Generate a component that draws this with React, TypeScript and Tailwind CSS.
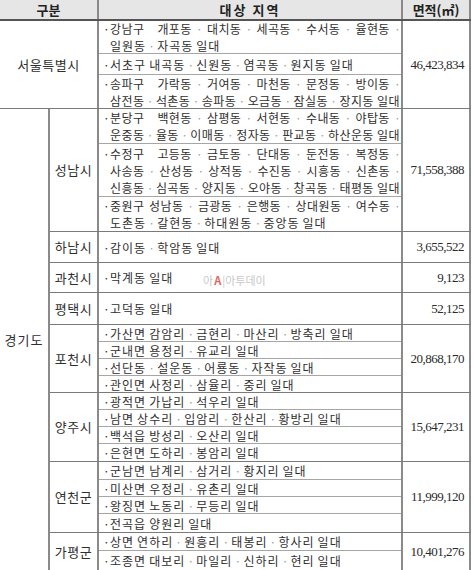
import React from 'react';
import clsx from 'clsx';

type Line = { t: string; full?: boolean; gu?: boolean };
type Sub = { h: string; lines: Line[] };
type City = { name: string; h: string; area: string; subs: Sub[] };

const seoul: Sub[] = [
  {
    h: 'h-[33px]',
    lines: [
      { t: '·강남구 개포동 · 대치동 · 세곡동 · 수서동 · 율현동 ·', full: true, gu: true },
      { t: '일원동 · 자곡동 일대' },
    ],
  },
  { h: 'h-[21px]', lines: [{ t: '·서초구 내곡동 · 신원동 · 염곡동 · 원지동 일대' }] },
  {
    h: 'h-[33px]',
    lines: [
      { t: '·송파구 가락동 · 거여동 · 마천동 · 문정동 · 방이동 ·', full: true, gu: true },
      { t: '삼전동 · 석촌동 · 송파동 · 오금동 · 잠실동 · 장지동 일대', full: true },
    ],
  },
];

const cities: City[] = [
  {
    name: '성남시',
    h: 'h-[123px]',
    area: '71,558,388',
    subs: [
      {
        h: 'h-[35px]',
        lines: [
          { t: '·분당구 백현동 · 삼평동 · 서현동 · 수내동 · 야탑동 ·', full: true, gu: true },
          { t: '운중동 · 율동 · 이매동 · 정자동 · 판교동 · 하산운동 일대', full: true },
        ],
      },
      {
        h: 'h-[53px]',
        lines: [
          { t: '·수정구 고등동 · 금토동 · 단대동 · 둔전동 · 복정동 ·', full: true, gu: true },
          { t: '사송동 · 산성동 · 상적동 · 수진동 · 시흥동 · 신촌동 ·', full: true },
          { t: '신흥동 · 심곡동 · 양지동 · 오야동 · 창곡동 · 태평동 일대', full: true },
        ],
      },
      {
        h: 'h-[34px]',
        lines: [
          { t: '·중원구 성남동 · 금광동 · 은행동 · 상대원동 · 여수동 ·', full: true },
          { t: '도촌동 · 갈현동 · 하대원동 · 중앙동 일대' },
        ],
      },
    ],
  },
  { name: '하남시', h: 'h-[31px]', area: '3,655,522', subs: [{ h: 'h-[30px]', lines: [{ t: '·감이동 · 학암동 일대' }] }] },
  { name: '과천시', h: 'h-[30px]', area: '9,123', subs: [{ h: 'h-[29px]', lines: [{ t: '·막계동 일대' }] }] },
  { name: '평택시', h: 'h-[32px]', area: '52,125', subs: [{ h: 'h-[31px]', lines: [{ t: '·고덕동 일대' }] }] },
  {
    name: '포천시',
    h: 'h-[68px]',
    area: '20,868,170',
    subs: [
      { h: 'h-[17px]', lines: [{ t: '·가산면 감암리 · 금현리 · 마산리 · 방축리 일대' }] },
      { h: 'h-[17px]', lines: [{ t: '·군내면 용정리 · 유교리 일대' }] },
      { h: 'h-[17px]', lines: [{ t: '·선단동 · 설운동 · 어룡동 · 자작동 일대' }] },
      { h: 'h-[16px]', lines: [{ t: '·관인면 사정리 · 삼율리 · 중리 일대' }] },
    ],
  },
  {
    name: '양주시',
    h: 'h-[69px]',
    area: '15,647,231',
    subs: [
      { h: 'h-[17px]', lines: [{ t: '·광적면 가납리 · 석우리 일대' }] },
      { h: 'h-[17px]', lines: [{ t: '·남면 상수리 · 입암리 · 한산리 · 황방리 일대' }] },
      { h: 'h-[17px]', lines: [{ t: '·백석읍 방성리 · 오산리 일대' }] },
      { h: 'h-[17px]', lines: [{ t: '·은현면 도하리 · 봉암리 일대' }] },
    ],
  },
  {
    name: '연천군',
    h: 'h-[71px]',
    area: '11,999,120',
    subs: [
      { h: 'h-[18px]', lines: [{ t: '·군남면 남계리 · 삼거리 · 황지리 일대' }] },
      { h: 'h-[17px]', lines: [{ t: '·미산면 우정리 · 유촌리 일대' }] },
      { h: 'h-[17px]', lines: [{ t: '·왕징면 노동리 · 무등리 일대' }] },
      { h: 'h-[18px]', lines: [{ t: '·전곡읍 양원리 일대' }] },
    ],
  },
  {
    name: '가평군',
    h: 'h-[38px]',
    area: '10,401,276',
    subs: [
      { h: 'h-[18px]', lines: [{ t: '·상면 연하리 · 원흥리 · 태봉리 · 항사리 일대' }] },
      { h: 'h-[19px]', lines: [{ t: '·조종면 대보리 · 마일리 · 신하리 · 현리 일대' }] },
    ],
  },
];

const TextLine = ({ line, cont }: { line: Line; cont: boolean }) => {
  const tokens = line.t.split(' ');
  return (
    <div
      className={clsx(
        'flex h-[17px] shrink-0 items-center whitespace-nowrap leading-[17px]',
        line.full ? 'justify-between pr-[1px] tracking-[0.4px]' : 'gap-[3px] tracking-[1px]',
        cont ? 'pl-[11px]' : 'pl-[4px]'
      )}
    >
      {tokens.map((tok, i) =>
        tok === '·' ? (
          <span key={i} className="flex w-[5px] justify-center tracking-normal text-[#a0a0a0]">·</span>
        ) : tok.startsWith('·') ? (
          <span key={i} className={clsx('flex', line.gu && 'mr-[8px]')}>
            <span className="inline-block w-[7px] tracking-normal">·</span>
            {tok.slice(1)}
          </span>
        ) : (
          <span key={i}>{tok}</span>
        )
      )}
    </div>
  );
};

const Areas = ({ subs }: { subs: Sub[] }) => (
  <div className="flex w-[304px] shrink-0 flex-col border-r-2 border-[#8a8a8a]">
    {subs.map((s, i) => (
      <div
        key={i}
        className={clsx(
          'flex flex-col justify-center overflow-hidden',
          s.h,
          i < subs.length - 1 && 'border-b border-[#a6a6a6]'
        )}
      >
        {s.lines.map((l, j) => (
          <TextLine key={j} line={l} cont={j > 0} />
        ))}
      </div>
    ))}
  </div>
);

const Num = ({ v }: { v: string }) => (
  <div className="flex w-[68px] shrink-0 items-center justify-end border-r-2 border-[#8a8a8a] pr-[5px] font-['Liberation_Serif',serif] text-[13px] tracking-[-0.5px] text-[#2a2a2a]">
    {v}
  </div>
);

export default function App() {
  return (
    <div className="relative h-[570px] w-[474px] overflow-hidden bg-white font-['Noto_Sans_CJK_KR',sans-serif] text-[12px] text-[#2f2f2f]">
      <div className="w-[471px]">
        <div className="flex h-[21px] border-b-2 border-[#555] bg-[#e6e6e6] text-[13px] font-bold text-[#222]">
          <div className="flex w-[99px] items-center justify-center border-r-2 border-[#8a8a8a]">구분</div>
          <div className="flex w-[304px] items-center justify-center border-r-2 border-[#8a8a8a] tracking-[2px]">대상 지역</div>
          <div className="flex w-[68px] items-center justify-center border-r-2 border-[#8a8a8a]">면적(㎡)</div>
        </div>

        <div className="flex h-[88px] border-b border-[#7a7a7a]">
          <div className="flex w-[99px] items-center justify-center border-r-2 border-[#8a8a8a] text-[13px] tracking-[0.5px]">
            서울특별시
          </div>
          <Areas subs={seoul} />
          <Num v="46,423,834" />
        </div>

        <div className="flex h-[462px]">
          <div className="flex w-[50px] shrink-0 items-center justify-center border-r-2 border-[#8a8a8a] text-[13px] tracking-[1px]">
            경기도
          </div>
          <div className="flex flex-col">
            {cities.map((c) => (
              <div key={c.name} className={clsx('flex shrink-0 border-b border-[#7a7a7a]', c.h)}>
                <div className="flex w-[49px] shrink-0 items-center justify-center border-r-2 border-[#8a8a8a] text-[13px] tracking-[0.5px]">
                  {c.name}
                </div>
                <Areas subs={c.subs} />
                <Num v={c.area} />
              </div>
            ))}
          </div>
        </div>
      </div>

      <div className="absolute left-[203px] top-[275px] flex items-center text-[11px] leading-none text-[#c8c8c8]">
        <span>아</span>
        <span className="mx-[1px] font-bold text-[#e06666]">A</span>
        <span>|아투데이</span>
      </div>
    </div>
  );
}
